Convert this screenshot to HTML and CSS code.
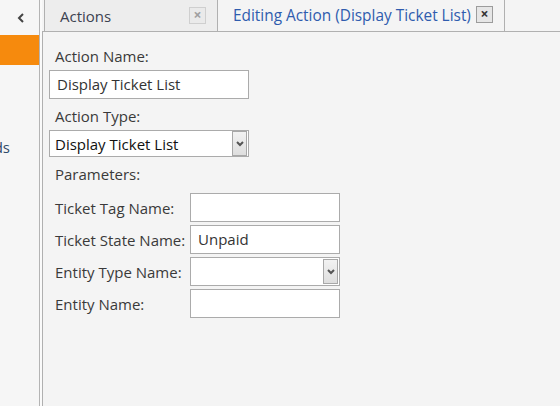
FILE: index.html
```html
<!DOCTYPE html>
<html lang="en">
<head>
  <meta charset="UTF-8">
  <title>Editing Action</title>
  <link rel="stylesheet" href="styles.css">
</head>
<body>
  <div class="shell">
    <div class="sidebar">
      <div class="collapse">
        <svg width="8" height="10" viewBox="0 0 8 10"><path d="M6 1 L2 5 L6 9" fill="none" stroke="#444" stroke-width="2"/></svg>
      </div>
      <div class="nav-active"></div>
      <div class="nav-item"><span>Commands</span></div>
    </div>

    <div class="main">
      <div class="tabs">
        <div class="tab">
          <span class="tab-title">Actions</span>
          <span class="tab-close">×</span>
        </div>
        <div class="tab tab-active">
          <span class="tab-title">Editing Action (Display Ticket List)</span>
          <span class="tab-close">×</span>
        </div>
      </div>

      <div class="panel">
        <div class="form">
          <div class="label">Action Name:</div>
          <div class="field wide">Display Ticket List</div>

          <div class="label gap">Action Type:</div>
          <div class="combo wide">
            <span class="combo-text">Display Ticket List</span>
            <span class="combo-btn">
              <svg width="8" height="6" viewBox="0 0 8 6"><path d="M1 1 L4 4 L7 1" fill="none" stroke="#555" stroke-width="2"/></svg>
            </span>
          </div>

          <div class="label gap">Parameters:</div>
          <div class="params">
            <div class="param-label">Ticket Tag Name:</div>
            <div class="field"></div>

            <div class="param-label">Ticket State Name:</div>
            <div class="field">Unpaid</div>

            <div class="param-label">Entity Type Name:</div>
            <div class="combo">
              <span class="combo-text"></span>
              <span class="combo-btn">
                <svg width="8" height="6" viewBox="0 0 8 6"><path d="M1 1 L4 4 L7 1" fill="none" stroke="#555" stroke-width="2"/></svg>
              </span>
            </div>

            <div class="param-label">Entity Name:</div>
            <div class="field"></div>
          </div>
        </div>
      </div>
    </div>
  </div>
</body>
</html>
```

FILE: styles.css
```css
html, body {
  margin: 0;
  height: 100%;
}
body {
  font-family: "Open Sans", "Noto Sans", sans-serif;
  font-size: 15px;
  color: #3a3a3a;
  background-color: #f4f4f4;
  overflow: hidden;
}
.shell {
  display: flex;
  height: 406px;
}

/* collapsed navigation on the left */
.sidebar {
  width: 39px;
  flex-shrink: 0;
  background-color: #f6f6f6;
  border-right: 1px solid #b4b4b4;
  overflow: hidden;
}
.collapse {
  height: 35px;
  display: flex;
  align-items: center;
  justify-content: flex-end;
  padding-right: 14px;
}
.nav-active {
  height: 30px;
  background-color: #f68a0d;
}
.nav-item {
  display: flex;
  justify-content: flex-end;
  padding-right: 29px;
  margin-top: 72px;
  color: #2e4a6a;
  font-size: 15px;
  white-space: nowrap;
}

/* document area */
.main {
  flex: 1;
  display: flex;
  flex-direction: column;
  padding-left: 2px;
  background-color: #fafafa;
}
.tabs {
  display: flex;
  height: 32px;
  padding-left: 2px;
  background-color: #f4f4f4;
}
.tab {
  display: flex;
  align-items: center;
  justify-content: space-between;
  width: 146px;
  height: 31px;
  padding: 0 11px 0 15px;
  background-color: #ededed;
  border: 1px solid #b0b0b0;
  border-top: none;
}
.tab-title {
  font-size: 15px;
  color: #3c4250;
}
.tab-close {
  width: 15px;
  height: 15px;
  line-height: 14px;
  text-align: center;
  font-size: 14px;
  font-weight: bold;
  color: #a0a0a0;
  background-color: #eaeaea;
  border: 1px solid #cfcfcf;
}
.tab-active {
  width: auto;
  height: 32px;
  border-left: none;
  border-bottom: none;
  background-color: #f4f4f4;
  padding: 0 11px 2px 15px;
}
.tab-active .tab-title {
  font-size: 15.4px;
  color: #2f5cae;
  margin-right: 5px;
  margin-bottom: 2px;
}
.tab-active .tab-close {
  color: #333;
  background-color: #e6e6e6;
  border-color: #9c9c9c;
  margin-bottom: 3px;
}

.panel {
  flex: 1;
  background-color: #f4f4f4;
  border-left: 1px solid #b0b0b0;
  border-top: 1px solid #b0b0b0;
  margin-top: -1px;
}
.form {
  padding: 14px 0 0 6px;
}
.label {
  height: 20px;
  line-height: 20px;
  padding-left: 6px;
}
.label.gap {
  margin-top: 7px;
}
.field {
  width: 134px;
  height: 27px;
  line-height: 27px;
  padding: 0 7px;
  background-color: #fff;
  border: 1px solid #ababab;
  color: #333;
}
.wide {
  width: 184px;
  margin-top: 4px;
}
.combo {
  display: flex;
  align-items: center;
  justify-content: space-between;
  width: 142px;
  height: 25px;
  padding: 0 1px 0 5px;
  background-color: #fff;
  border: 1px solid #ababab;
  color: #111;
}
.combo.wide {
  width: 192px;
  margin-top: 4px;
}
.combo-btn {
  display: flex;
  align-items: center;
  justify-content: center;
  width: 13px;
  height: 23px;
  border: 1px solid #a8a8a8;
  background: linear-gradient(#f2f2f2, #dedede);
}
.params {
  display: grid;
  grid-template-columns: 141px 150px;
  grid-auto-rows: 29px;
  row-gap: 3px;
  align-items: center;
  margin-top: 9px;
}
.params .combo {
  height: 27px;
}
.param-label {
  padding-left: 6px;
  white-space: nowrap;
}
```
